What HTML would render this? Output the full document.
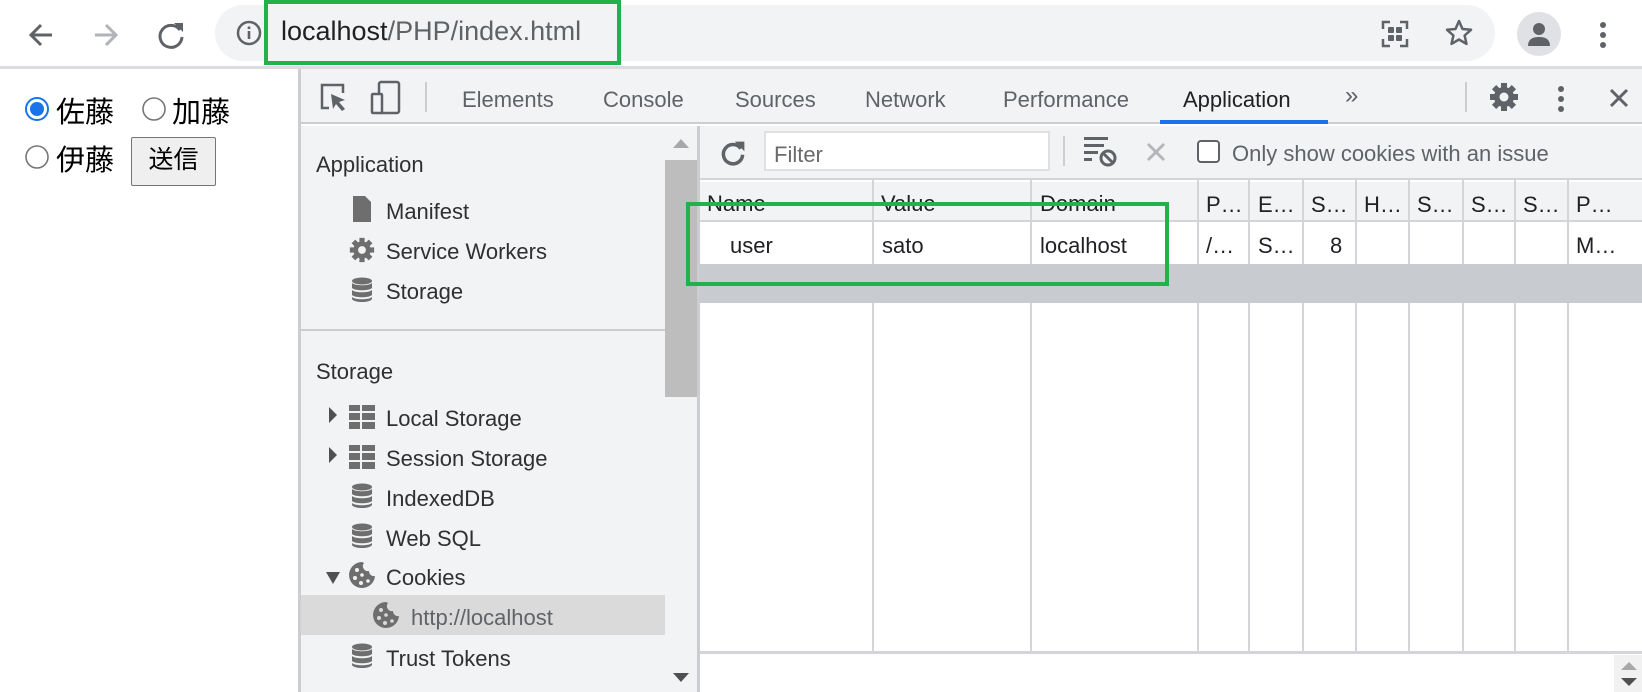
<!DOCTYPE html>
<html><head><meta charset="utf-8"><style>
*{margin:0;padding:0;box-sizing:border-box}
body{width:1642px;height:692px;overflow:hidden;background:#fff;font-family:"Liberation Sans","Noto Sans CJK JP",sans-serif;position:relative;color:#202124}
.a{position:absolute;white-space:nowrap}
.t{font-size:22px;color:#5f6368}
.s{font-size:22px;color:#303030}
.vl{position:absolute;width:2px;background:#d3d5d8;top:180px;height:473px}
</style></head><body>
<!-- browser toolbar -->
<div class="a" style="left:0;top:0;width:1642px;height:69px;background:#fff;border-bottom:3px solid #dadce0"></div>
<svg class="a" style="left:26px;top:20px" width="30" height="30" viewBox="0 0 30 30"><path d="M26 15H6M15 5L5 15l10 10" fill="none" stroke="#5f6368" stroke-width="3"/></svg>
<svg class="a" style="left:91px;top:20px" width="30" height="30" viewBox="0 0 30 30"><path d="M4 15h20M15 5l10 10-10 10" fill="none" stroke="#b0b3b8" stroke-width="3"/></svg>
<svg class="a" style="left:155px;top:19px" width="32" height="32" viewBox="0 0 32 32"><path d="M25 11A11 11 0 1 0 27 18" fill="none" stroke="#5f6368" stroke-width="3"/><path d="M19 4h9v9z" fill="#5f6368"/></svg>
<div class="a" style="left:215px;top:5px;width:1280px;height:56px;background:#f1f3f4;border-radius:28px"></div>
<svg class="a" style="left:236px;top:20px" width="26" height="26" viewBox="0 0 26 26"><circle cx="13" cy="13" r="11" fill="none" stroke="#5f6368" stroke-width="2.5"/><rect x="11.7" y="11" width="2.6" height="8" fill="#5f6368"/><rect x="11.7" y="6.5" width="2.6" height="2.6" fill="#5f6368"/></svg>
<div class="a" style="left:281px;top:16px;font-size:27px;color:#202124">localhost<span style="color:#5f6368">/PHP/index.html</span></div>
<div class="a" style="left:264px;top:0;width:357px;height:65px;border:4px solid #22b14c"></div>
<svg class="a" style="left:1381px;top:20px" width="28" height="28" viewBox="0 0 28 28"><path d="M2 9V2h7M19 2h7v7M26 19v7h-7M9 26H2v-7" fill="none" stroke="#5f6368" stroke-width="2.5"/><rect x="7" y="7" width="6" height="6" rx="1" fill="#5f6368"/><rect x="15" y="7" width="6" height="6" rx="1" fill="#5f6368"/><rect x="7" y="15" width="6" height="6" rx="1" fill="#5f6368"/><rect x="15" y="15" width="6" height="6" rx="1" fill="#5f6368"/></svg>
<svg class="a" style="left:1444px;top:18px" width="30" height="30" viewBox="0 0 30 30"><path d="M15 3l3.5 8 8.5.8-6.4 5.7 1.9 8.4L15 21.5 7.5 25.9l1.9-8.4L3 11.8l8.5-.8z" fill="none" stroke="#5f6368" stroke-width="2.5" stroke-linejoin="round"/></svg>
<div class="a" style="left:1517px;top:12px;width:44px;height:44px;border-radius:50%;background:#dfe1e5"></div>
<svg class="a" style="left:1525px;top:20px" width="28" height="28" viewBox="0 0 28 28"><circle cx="14" cy="9" r="6" fill="#5f6368"/><path d="M3 26c0-7 5-9 11-9s11 2 11 9z" fill="#5f6368"/></svg>
<svg class="a" style="left:1598px;top:20px" width="10" height="30"><circle cx="5" cy="5" r="3" fill="#5f6368"/><circle cx="5" cy="15" r="3" fill="#5f6368"/><circle cx="5" cy="25" r="3" fill="#5f6368"/></svg>

<!-- page content -->
<svg class="a" style="left:24px;top:96px" width="26" height="26"><circle cx="13" cy="13" r="11" fill="#fff" stroke="#1a73e8" stroke-width="2"/><circle cx="13" cy="13" r="7" fill="#1a73e8"/></svg>
<div class="a" style="left:56px;top:89px;font-size:29px;color:#000">佐藤</div>
<svg class="a" style="left:141px;top:96px" width="26" height="26"><circle cx="13" cy="13" r="11" fill="#fff" stroke="#767676" stroke-width="1.6"/></svg>
<div class="a" style="left:172px;top:89px;font-size:29px;color:#000">加藤</div>
<svg class="a" style="left:24px;top:144px" width="26" height="26"><circle cx="13" cy="13" r="11" fill="#fff" stroke="#767676" stroke-width="1.6"/></svg>
<div class="a" style="left:56px;top:137px;font-size:29px;color:#000">伊藤</div>
<div class="a" style="left:131px;top:137px;width:85px;height:49px;background:#efefef;border:1.5px solid #767676;border-radius:2px;font-size:25px;color:#000;text-align:center;line-height:45px">送信</div>

<!-- devtools -->
<div class="a" style="left:298px;top:69px;width:3px;height:623px;background:#cbcdd1"></div>
<div class="a" style="left:301px;top:69px;width:1341px;height:55px;background:#f1f3f4;border-bottom:2px solid #cbcdd1"></div>
<svg class="a" style="left:319px;top:82px" width="30" height="32" viewBox="0 0 30 32"><path d="M10 26H3V3h21v8" fill="none" stroke="#5f6368" stroke-width="2.5"/><path d="M12 12l14 6-6 2 6 7-3 2-6-7-3 5z" fill="#5f6368"/></svg>
<svg class="a" style="left:370px;top:80px" width="32" height="36" viewBox="0 0 32 36"><rect x="9" y="2" width="20" height="31" rx="2" fill="none" stroke="#5f6368" stroke-width="2.5"/><rect x="2" y="14" width="10" height="19" rx="1" fill="#f1f3f4" stroke="#5f6368" stroke-width="2.5"/></svg>
<div class="a" style="left:425px;top:82px;width:2px;height:30px;background:#cbcdd1"></div>
<div class="a t" style="left:462px;top:87px">Elements</div>
<div class="a t" style="left:603px;top:87px">Console</div>
<div class="a t" style="left:735px;top:87px">Sources</div>
<div class="a t" style="left:865px;top:87px">Network</div>
<div class="a t" style="left:1003px;top:87px">Performance</div>
<div class="a t" style="left:1183px;top:87px;color:#202124">Application</div>
<div class="a" style="left:1160px;top:120px;width:168px;height:4px;background:#1a73e8"></div>
<div class="a t" style="left:1345px;top:82px;font-size:24px">»</div>
<div class="a" style="left:1465px;top:82px;width:2px;height:30px;background:#cbcdd1"></div>
<svg class="a" style="left:1489px;top:82px" width="30" height="30" viewBox="0 0 30 30"><g fill="#5f6368"><circle cx="15" cy="15" r="10"/><rect x="12" y="1" width="6" height="28"/><rect x="1" y="12" width="28" height="6"/><rect x="12" y="1" width="6" height="28" transform="rotate(45 15 15)"/><rect x="12" y="1" width="6" height="28" transform="rotate(-45 15 15)"/></g><circle cx="15" cy="15" r="4.5" fill="#f1f3f4"/></svg>
<svg class="a" style="left:1556px;top:84px" width="10" height="30"><circle cx="5" cy="5" r="3" fill="#5f6368"/><circle cx="5" cy="15" r="3" fill="#5f6368"/><circle cx="5" cy="25" r="3" fill="#5f6368"/></svg>
<svg class="a" style="left:1608px;top:87px" width="22" height="22"><path d="M3 3l16 16M19 3L3 19" stroke="#5f6368" stroke-width="3"/></svg>

<!-- sidebar -->
<div class="a" style="left:301px;top:126px;width:364px;height:566px;background:#f1f3f4"></div>
<div class="a" style="left:665px;top:126px;width:32px;height:566px;background:#f1f3f4"></div>
<div class="a" style="left:665px;top:160px;width:32px;height:237px;background:#bdbdbd"></div>
<svg class="a" style="left:672px;top:137px" width="18" height="12"><path d="M1 11L9 2l8 9z" fill="#a8a8a8"/></svg>
<svg class="a" style="left:672px;top:672px" width="18" height="12"><path d="M1 1h16l-8 9z" fill="#505050"/></svg>
<div class="a" style="left:697px;top:126px;width:3px;height:566px;background:#cbcdd1"></div>
<div class="a s" style="left:316px;top:152px">Application</div>
<svg class="a" style="left:353px;top:196px" width="18" height="26"><path d="M0 0h12l6 6v20H0z" fill="#6e6e6e"/></svg>
<div class="a s" style="left:386px;top:199px">Manifest</div>
<svg class="a" style="left:349px;top:236px" width="26" height="28" viewBox="0 0 30 30"><g fill="#6e6e6e"><circle cx="15" cy="15" r="10"/><rect x="12" y="1" width="6" height="28"/><rect x="1" y="12" width="28" height="6"/><rect x="12" y="1" width="6" height="28" transform="rotate(45 15 15)"/><rect x="12" y="1" width="6" height="28" transform="rotate(-45 15 15)"/></g><circle cx="15" cy="15" r="4.5" fill="#f1f3f4"/></svg>
<div class="a s" style="left:386px;top:239px">Service Workers</div>
<svg class="a" style="left:351px;top:277px" width="22" height="26" viewBox="0 0 22 26"><g fill="#6e6e6e"><ellipse cx="11" cy="4" rx="10" ry="3.5"/><path d="M1 6c3 3 17 3 20 0v5c-3 3-17 3-20 0z"/><path d="M1 13c3 3 17 3 20 0v5c-3 3-17 3-20 0z"/><path d="M1 20c3 3 17 3 20 0v2c-2 4-18 4-20 0z"/></g></svg>
<div class="a s" style="left:386px;top:279px">Storage</div>
<div class="a" style="left:301px;top:329px;width:364px;height:2px;background:#cbcdd1"></div>
<div class="a s" style="left:316px;top:359px">Storage</div>

<svg class="a" style="left:327px;top:406px" width="12" height="18"><path d="M2 1l8 8-8 8z" fill="#505050"/></svg>
<svg class="a" style="left:349px;top:405px" width="26" height="24"><g fill="#6e6e6e"><rect x="0" y="0" width="11" height="6"/><rect x="13" y="0" width="13" height="6"/><rect x="0" y="8" width="11" height="7"/><rect x="13" y="8" width="13" height="7"/><rect x="0" y="17" width="11" height="7"/><rect x="13" y="17" width="13" height="7"/></g></svg>
<div class="a s" style="left:386px;top:406px">Local Storage</div>
<svg class="a" style="left:327px;top:446px" width="12" height="18"><path d="M2 1l8 8-8 8z" fill="#505050"/></svg>
<svg class="a" style="left:349px;top:445px" width="26" height="24"><g fill="#6e6e6e"><rect x="0" y="0" width="11" height="6"/><rect x="13" y="0" width="13" height="6"/><rect x="0" y="8" width="11" height="7"/><rect x="13" y="8" width="13" height="7"/><rect x="0" y="17" width="11" height="7"/><rect x="13" y="17" width="13" height="7"/></g></svg>
<div class="a s" style="left:386px;top:446px">Session Storage</div>
<svg class="a" style="left:351px;top:483px" width="22" height="26" viewBox="0 0 22 26"><g fill="#6e6e6e"><ellipse cx="11" cy="4" rx="10" ry="3.5"/><path d="M1 6c3 3 17 3 20 0v5c-3 3-17 3-20 0z"/><path d="M1 13c3 3 17 3 20 0v5c-3 3-17 3-20 0z"/><path d="M1 20c3 3 17 3 20 0v2c-2 4-18 4-20 0z"/></g></svg>
<div class="a s" style="left:386px;top:486px">IndexedDB</div>
<svg class="a" style="left:351px;top:523px" width="22" height="26" viewBox="0 0 22 26"><g fill="#6e6e6e"><ellipse cx="11" cy="4" rx="10" ry="3.5"/><path d="M1 6c3 3 17 3 20 0v5c-3 3-17 3-20 0z"/><path d="M1 13c3 3 17 3 20 0v5c-3 3-17 3-20 0z"/><path d="M1 20c3 3 17 3 20 0v2c-2 4-18 4-20 0z"/></g></svg>
<div class="a s" style="left:386px;top:526px">Web SQL</div>
<svg class="a" style="left:325px;top:571px" width="16" height="14"><path d="M1 1h14l-7 12z" fill="#505050"/></svg>
<svg class="a" style="left:348px;top:561px" width="28" height="28" viewBox="0 0 28 28"><path d="M14 1a13 13 0 1 0 13 14 5 5 0 0 1-6-5 5 5 0 0 1-5-8z" fill="#6e6e6e"/><g fill="#f1f3f4"><circle cx="9" cy="9" r="2"/><circle cx="7" cy="17" r="2"/><circle cx="14" cy="14" r="1.8"/><circle cx="13" cy="22" r="2"/><circle cx="20" cy="20" r="1.8"/></g></svg>
<div class="a s" style="left:386px;top:565px">Cookies</div>
<div class="a" style="left:301px;top:595px;width:364px;height:40px;background:#dadada"></div>
<svg class="a" style="left:372px;top:601px" width="28" height="28" viewBox="0 0 28 28"><path d="M14 1a13 13 0 1 0 13 14 5 5 0 0 1-6-5 5 5 0 0 1-5-8z" fill="#6e6e6e"/><g fill="#dadada"><circle cx="9" cy="9" r="2"/><circle cx="7" cy="17" r="2"/><circle cx="14" cy="14" r="1.8"/><circle cx="13" cy="22" r="2"/><circle cx="20" cy="20" r="1.8"/></g></svg>
<div class="a s" style="left:411px;top:605px;color:#5f6368">http://localhost</div>
<svg class="a" style="left:351px;top:643px" width="22" height="26" viewBox="0 0 22 26"><g fill="#6e6e6e"><ellipse cx="11" cy="4" rx="10" ry="3.5"/><path d="M1 6c3 3 17 3 20 0v5c-3 3-17 3-20 0z"/><path d="M1 13c3 3 17 3 20 0v5c-3 3-17 3-20 0z"/><path d="M1 20c3 3 17 3 20 0v2c-2 4-18 4-20 0z"/></g></svg>
<div class="a s" style="left:386px;top:646px">Trust Tokens</div>

<!-- right panel -->
<div class="a" style="left:700px;top:126px;width:942px;height:54px;background:#f1f3f4;border-bottom:2px solid #d3d5d8"></div>
<svg class="a" style="left:719px;top:139px" width="28" height="28" viewBox="0 0 32 32"><path d="M25 11A11 11 0 1 0 27 18" fill="none" stroke="#5f6368" stroke-width="4"/><path d="M18 3h11v11z" fill="#5f6368"/></svg>
<div class="a" style="left:764px;top:131px;width:286px;height:40px;background:#fff;border:2px solid #e0e0e0"></div>
<div class="a" style="left:774px;top:142px;font-size:22px;color:#6b6b6b">Filter</div>
<div class="a" style="left:1063px;top:136px;width:2px;height:30px;background:#cbcdd1"></div>
<svg class="a" style="left:1084px;top:137px" width="34" height="30"><g fill="#5f6368"><rect x="0" y="0" width="24" height="3"/><rect x="0" y="7" width="20" height="3"/><rect x="0" y="14" width="14" height="3"/><rect x="0" y="21" width="8" height="3"/></g><circle cx="24" cy="21" r="7" fill="none" stroke="#5f6368" stroke-width="3"/><path d="M19 16l10 10" stroke="#5f6368" stroke-width="3"/></svg>
<svg class="a" style="left:1146px;top:142px" width="20" height="20"><path d="M2 2l16 16M18 2L2 18" stroke="#b4b6ba" stroke-width="3"/></svg>
<div class="a" style="left:1197px;top:140px;width:23px;height:23px;border:2px solid #5f6368;border-radius:4px;background:#fff"></div>
<div class="a t" style="left:1232px;top:141px">Only show cookies with an issue</div>

<div class="a" style="left:700px;top:182px;width:942px;height:40px;background:#f1f3f4;border-bottom:2px solid #d3d5d8"></div>
<div class="a" style="left:700px;top:222px;width:942px;height:42px;background:#fff"></div>
<div class="a" style="left:700px;top:303px;width:942px;height:349px;background:#fff"></div>
<div class="vl" style="left:872px"></div>
<div class="vl" style="left:1030px"></div>
<div class="vl" style="left:1197px"></div>
<div class="vl" style="left:1248px"></div>
<div class="vl" style="left:1302px"></div>
<div class="vl" style="left:1355px"></div>
<div class="vl" style="left:1408px"></div>
<div class="vl" style="left:1462px"></div>
<div class="vl" style="left:1514px"></div>
<div class="vl" style="left:1567px"></div>
<div class="a" style="left:700px;top:264px;width:942px;height:39px;background:#c8cbcf"></div>
<div class="a" style="left:700px;top:651px;width:942px;height:3px;background:#d3d5d8"></div>
<div class="a" style="left:700px;top:654px;width:942px;height:38px;background:#fff"></div>
<div class="a" style="left:1614px;top:655px;width:28px;height:37px;background:#f1f1f1"></div>
<svg class="a" style="left:1620px;top:660px" width="18" height="28"><path d="M1 10l8-8 8 8z" fill="#a8a8a8"/><path d="M1 18h16l-8 8z" fill="#505050"/></svg>

<div class="a" style="left:707px;top:186px;font-size:22px;color:#202124;line-height:36px;clip-path:inset(8px 0 0 0)">Name</div>
<div class="a" style="left:881px;top:186px;font-size:22px;line-height:36px;clip-path:inset(8px 0 0 0)">Value</div>
<div class="a" style="left:1040px;top:186px;font-size:22px;line-height:36px;clip-path:inset(8px 0 0 0)">Domain</div>
<div class="a" style="left:1206px;top:192px;font-size:22px">P…</div>
<div class="a" style="left:1258px;top:192px;font-size:22px">E…</div>
<div class="a" style="left:1311px;top:192px;font-size:22px">S…</div>
<div class="a" style="left:1364px;top:192px;font-size:22px">H…</div>
<div class="a" style="left:1417px;top:192px;font-size:22px">S…</div>
<div class="a" style="left:1471px;top:192px;font-size:22px">S…</div>
<div class="a" style="left:1523px;top:192px;font-size:22px">S…</div>
<div class="a" style="left:1576px;top:192px;font-size:22px">P…</div>
<div class="a" style="left:730px;top:233px;font-size:22px">user</div>
<div class="a" style="left:882px;top:233px;font-size:22px">sato</div>
<div class="a" style="left:1040px;top:233px;font-size:22px">localhost</div>
<div class="a" style="left:1206px;top:233px;font-size:22px">/…</div>
<div class="a" style="left:1258px;top:233px;font-size:22px">S…</div>
<div class="a" style="left:1330px;top:233px;font-size:22px">8</div>
<div class="a" style="left:1576px;top:233px;font-size:22px">M…</div>
<div class="a" style="left:686px;top:202px;width:483px;height:84px;border:4px solid #22b14c"></div>
</body></html>
